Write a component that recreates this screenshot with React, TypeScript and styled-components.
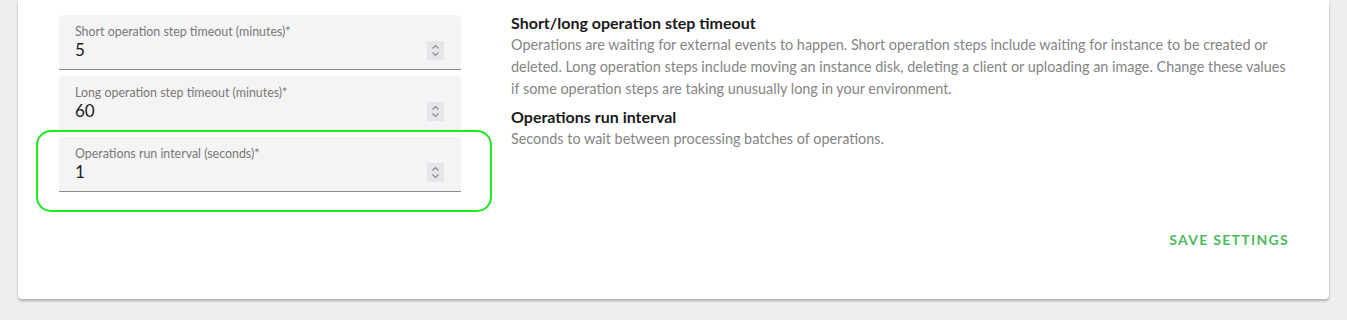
import React from 'react';
import styled, { createGlobalStyle } from 'styled-components';

const GlobalStyle = createGlobalStyle`
  body {
    margin: 0;
    background: #efefef;
    font-family: Lato, "Open Sans", Arial, sans-serif;
  }
`;

const Page = styled.div`
  padding: 0 18px 21px;
`;

const Card = styled.div`
  background: #ffffff;
  border-radius: 0 0 4px 4px;
  box-shadow: 0 2px 3px rgba(0, 0, 0, 0.28);
  padding: 15px 40px 0 41px;
  height: 284px;
  box-sizing: content-box;
  display: flex;
  flex-direction: column;
`;

const Row = styled.div`
  display: grid;
  grid-template-columns: 402px 1fr;
  column-gap: 50px;
`;

const Fields = styled.div`
  display: flex;
  flex-direction: column;
  gap: 6px;
`;

const FieldWrap = styled.div`
  position: relative;
`;

const Field = styled.div`
  background: #f4f4f4;
  border-radius: 4px 4px 0 0;
  border-bottom: 1px solid #8c8c8c;
  height: 55px;
  padding: 9px 17px 0 16px;
  box-sizing: border-box;
  display: flex;
  flex-direction: column;
`;

const Label = styled.div`
  font-size: 12.4px;
  color: #787878;
  line-height: 15px;
`;

const InputRow = styled.div`
  display: flex;
  align-items: center;
  justify-content: space-between;
  margin-top: 1px;
`;

const Value = styled.div`
  font-size: 17px;
  color: #1c1c1c;
  line-height: 20px;
`;

const Spinner = styled.div`
  width: 17px;
  height: 19px;
  background: #e6e6ea;
  display: flex;
  align-items: center;
  justify-content: center;
`;

const Highlight = styled.div`
  position: absolute;
  top: -7px;
  left: -23px;
  right: -31px;
  bottom: -20px;
  border: 2px solid #1ee81e;
  border-radius: 15px;
  pointer-events: none;
`;

const Help = styled.div`
  margin-top: -2px;
`;

const HelpTitle = styled.div`
  font-size: 16px;
  font-weight: 700;
  color: #1a1a1a;
  line-height: 20px;
`;

const HelpText = styled.p`
  margin: 1px 0 7px;
  font-size: 14.4px;
  line-height: 22px;
  color: #858585;
`;

const Footer = styled.div`
  display: flex;
  justify-content: flex-end;
  margin-top: 33px;
`;

const SaveButton = styled.button`
  background: none;
  border: none;
  font-family: inherit;
  font-size: 14px;
  font-weight: 700;
  letter-spacing: 1.3px;
  color: #4dbb5c;
  padding: 6px 0;
  cursor: pointer;
`;

const SpinIcon = () => (
  <svg width="9" height="13" viewBox="0 0 9 13" fill="none" stroke="#8a8a96" strokeWidth="1.2">
    <path d="M1.5 4.5 L4.5 1.5 L7.5 4.5" />
    <path d="M1.5 8.5 L4.5 11.5 L7.5 8.5" />
  </svg>
);

interface NumberFieldProps {
  label: string;
  value: string;
  highlighted?: boolean;
}

const NumberField: React.FC<NumberFieldProps> = ({ label, value, highlighted }) => (
  <FieldWrap>
    <Field>
      <Label>{label}</Label>
      <InputRow>
        <Value>{value}</Value>
        <Spinner>
          <SpinIcon />
        </Spinner>
      </InputRow>
    </Field>
    {highlighted && <Highlight />}
  </FieldWrap>
);

export default function App() {
  return (
    <Page>
      <GlobalStyle />
      <Card>
        <Row>
          <Fields>
            <NumberField label="Short operation step timeout (minutes)*" value="5" />
            <NumberField label="Long operation step timeout (minutes)*" value="60" />
            <NumberField label="Operations run interval (seconds)*" value="1" highlighted />
          </Fields>
          <Help>
            <HelpTitle>Short/long operation step timeout</HelpTitle>
            <HelpText>
              Operations are waiting for external events to happen. Short operation steps include waiting for
              instance to be created or deleted. Long operation steps include moving an instance disk, deleting a
              client or uploading an image. Change these values if some operation steps are taking unusually long
              in your environment.
            </HelpText>
            <HelpTitle>Operations run interval</HelpTitle>
            <HelpText>Seconds to wait between processing batches of operations.</HelpText>
          </Help>
        </Row>
        <Footer>
          <SaveButton>SAVE SETTINGS</SaveButton>
        </Footer>
      </Card>
    </Page>
  );
}
